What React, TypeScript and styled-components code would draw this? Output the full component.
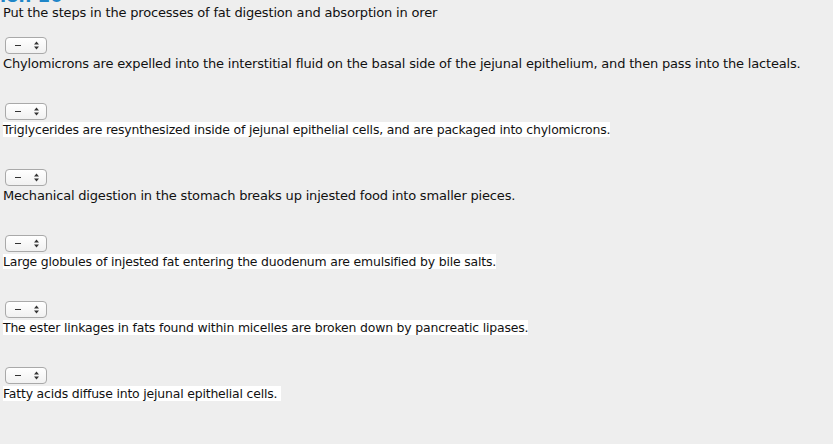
import React from 'react';
import styled, { createGlobalStyle } from 'styled-components';

const Global = createGlobalStyle`
  html, body {
    margin: 0;
    padding: 0;
    background: #eeeeee;
  }
  body {
    font-family: 'DejaVu Sans', Verdana, sans-serif;
    font-size: 13px;
    letter-spacing: -0.18px;
    color: #111;
  }
`;

const steps = [
  { text: 'Chylomicrons are expelled into the interstitial fluid on the basal side of the jejunal epithelium, and then pass into the lacteals.', white: false },
  { text: 'Triglycerides are resynthesized inside of jejunal epithelial cells, and are packaged into chylomicrons.', white: true },
  { text: 'Mechanical digestion in the stomach breaks up injested food into smaller pieces.', white: false },
  { text: 'Large globules of injested fat entering the duodenum are emulsified by bile salts.', white: true },
  { text: 'The ester linkages in fats found within micelles are broken down by pancreatic lipases.', white: true },
  { text: 'Fatty acids diffuse into jejunal epithelial cells.\u00a0', white: true },
];

const App = () => {
  return (
    <Page>
      <Global />
      <Heading>ion 10</Heading>
      <Prompt>Put the steps in the processes of fat digestion and absorption in orer</Prompt>
      {steps.map((s, i) => (
        <Step key={i}>
          <Select>
            <Dash />
            <svg width="7" height="9" viewBox="0 0 7 9">
              <path d="M3.5 0.5 L6 3.5 L1 3.5 Z" fill="#333" />
              <path d="M3.5 8.5 L6 5.5 L1 5.5 Z" fill="#333" />
            </svg>
          </Select>
          <Line>
            <Text white={s.white}>{s.text}</Text>
          </Line>
        </Step>
      ))}
    </Page>
  );
};

const Page = styled.div`
  padding: 0 0 0 3px;
  overflow: hidden;
  min-height: 444px;
`;
const Heading = styled.div`
  margin: -14px 0 0 -3px;
  height: 19px;
  font-size: 18px;
  line-height: 19px;
  font-weight: 700;
  letter-spacing: 0;
  color: #1f86c8;
  overflow: hidden;
`;
const Prompt = styled.div`
  line-height: 16px;
`;
const Step = styled.div`
  display: flex;
  flex-direction: column;
  align-items: flex-start;
  margin-top: 16px;
  & + & {
    margin-top: 31px;
  }
`;
const Select = styled.div`
  box-sizing: border-box;
  width: 42px;
  height: 17px;
  margin-left: 2px;
  border: 1px solid #a9a9a9;
  border-radius: 4px;
  background: linear-gradient(#ffffff, #f1f1f1);
  display: flex;
  align-items: center;
  justify-content: space-between;
  padding: 0 6px 0 9px;
`;
const Dash = styled.span`
  width: 6px;
  height: 1px;
  background: #333;
`;
const Line = styled.div`
  margin-top: 2px;
  height: 16px;
  line-height: 16px;
`;
const Text = styled.span<{ white: boolean }>`
  font-size: ${(p) => (p.white ? '12.45px' : '13px')};
  background: ${(p) => (p.white ? '#ffffff' : 'transparent')};
`;

export default App;
